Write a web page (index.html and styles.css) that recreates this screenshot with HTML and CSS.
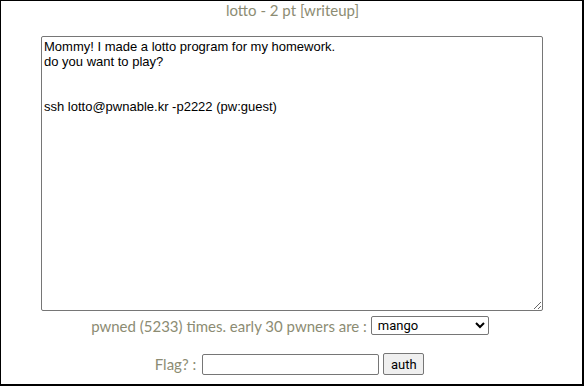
FILE: index.html
```html
<!DOCTYPE html>
<html lang="en">
<head>
<meta charset="UTF-8" />
<title>lotto</title>
<link rel="stylesheet" href="styles.css">
</head>
<body>
<div id="frame">
  <div class="title">lotto - 2 pt [writeup]</div>
  <textarea class="desc" readonly>Mommy! I made a lotto program for my homework.
do you want to play?


ssh lotto@pwnable.kr -p2222 (pw:guest)</textarea>
  <div class="row pwners">
    <span>pwned (5233) times. early 30 pwners are :</span>
    <select class="pick">
      <option>mango</option>
    </select>
  </div>
  <div class="row flag">
    <span>Flag? :</span>
    <input type="text" class="flag-input" />
    <button class="auth">auth</button>
  </div>
</div>
</body>
</html>
```

FILE: styles.css
```css
html, body {
  margin: 0;
  padding: 0;
  background: #fff;
}

#frame {
  width: 581px;
  height: 383px;
  border-style: solid;
  border-color: #000;
  border-width: 1px 2px 2px 1px;
  display: flex;
  flex-direction: column;
  align-items: center;
  font-family: Lato, "Open Sans", sans-serif;
  color: #8c8c73;
  font-size: 15px;
}

.title {
  margin-top: 0;
  height: 18px;
  line-height: 18px;
  font-size: 15px;
  margin-left: 2px;
}

.desc {
  margin-top: 17px;
  margin-left: 1px;
  width: 502px;
  height: 275px;
  box-sizing: border-box;
  border: 1px solid #767676;
  border-radius: 2px;
  padding: 2px 2px;
  font-family: "Liberation Sans", Arial, sans-serif;
  font-size: 13px;
  line-height: 15px;
  color: #000;
  resize: both;
}

.row {
  display: flex;
  align-items: center;
}

.pwners {
  margin-top: 5px;
  gap: 4px;
  margin-left: -3px;
}

.pick {
  width: 118px;
  height: 19px;
  font-family: Roboto, "Liberation Sans", sans-serif;
  font-size: 13px;
  color: #000;
  border: 1px solid #767676;
  border-radius: 2px;
  background: #fff;
  padding: 0 2px;
}

.flag {
  margin-top: 18px;
  gap: 4px;
  margin-left: -4px;
}

.flag span {
  margin-right: 2px;
}

.flag-input {
  width: 177px;
  height: 21px;
  box-sizing: border-box;
  border: 1px solid #767676;
  border-radius: 2px;
  padding: 1px 2px;
}

.auth {
  width: 41px;
  height: 22px;
  box-sizing: border-box;
  border: 1px solid #767676;
  border-radius: 2px;
  background: #efefef;
  font-family: Roboto, "Liberation Sans", sans-serif;
  font-size: 13px;
  color: #000;
  padding: 0;
}
```
